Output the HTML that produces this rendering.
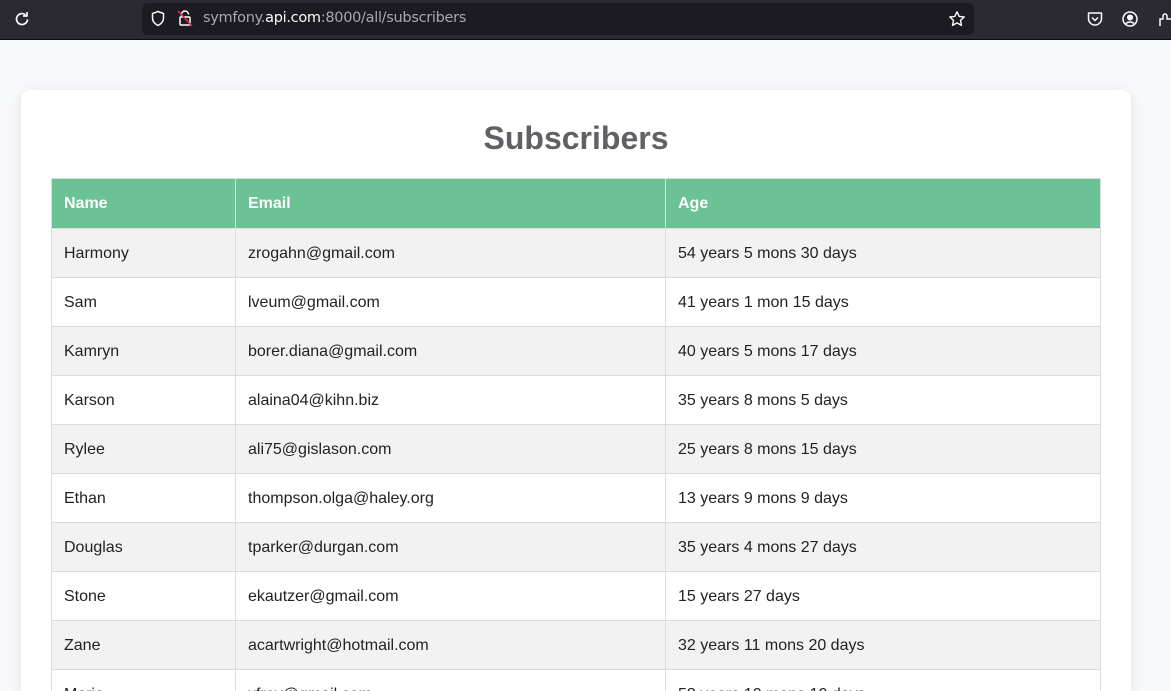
<!DOCTYPE html>
<html><head><meta charset="utf-8"><style>
*{box-sizing:border-box;margin:0;padding:0}
html,body{width:1171px;height:691px;overflow:hidden;background:#f8f9fb;font-family:"Liberation Sans",sans-serif}
.wrap{position:relative;width:1171px;height:691px;overflow:hidden}
.bar{position:absolute;left:0;top:0;width:1171px;height:40px;background:#2b2a33;border-bottom:1px solid #0c0c0d}
.url{position:absolute;left:142px;top:3px;width:832px;height:32px;background:#1c1b22;border-radius:5px}
.url span.t{position:absolute;left:61px;top:7px;font-family:"DejaVu Sans","Liberation Sans",sans-serif;font-size:14.5px;color:#a9a8ae;letter-spacing:-0.3px}
.url span.t b{font-weight:normal;color:#fbfbfe}
.card{position:absolute;left:21px;top:90px;width:1110px;height:601px;background:#fff;border-radius:9px 9px 0 0;box-shadow:0 2px 12px rgba(0,0,0,.1)}
h1{position:absolute;left:21px;width:1110px;top:120px;text-align:center;font-size:32px;font-weight:bold;color:#5f6164}
.tc{position:absolute;left:51px;top:178px;width:1050px;height:513px;overflow:hidden}
table{width:1050px;border-collapse:collapse;font-size:16px}
th,td{border:1px solid #dcdcdc;text-align:left;padding:0 12px;height:49px}
td{padding-top:2px}
th{background:#6ac295;color:#fff;font-weight:bold;height:50px;border-color:#ddd}
td{color:#222}
tr:nth-child(even) td{background:#f2f2f2}
tr:nth-child(odd) td{background:#fff}
</style></head><body><div class="wrap">
<div class="bar">
<svg style="position:absolute;left:13px;top:10px" width="18" height="18" viewBox="0 0 18 18" fill="none" stroke="#fbfbfe" stroke-width="1.7"><path d="M14.5 9.5A5.5 5.5 0 1 1 12.5 4.8"/><path d="M14 2v4h-4" stroke-linejoin="round"/></svg>
<div class="url">
<svg style="position:absolute;left:8px;top:7px" width="16" height="17" viewBox="0 0 16 17" fill="none" stroke="#fbfbfe" stroke-width="1.5"><path d="M8 1.5l5.5 2v4.5c0 3.5-2.5 6-5.5 7.5C5 14 2.5 11.5 2.5 8V3.5z"/></svg>
<svg style="position:absolute;left:35px;top:6px" width="16" height="18" viewBox="0 0 16 18" fill="none" stroke="#fbfbfe" stroke-width="1.5"><path d="M4.5 8V5.5a3.5 3.5 0 0 1 7 0"/><rect x="3" y="8" width="10" height="8" rx="1"/><path d="M1 2l14 15" stroke="#e22850" stroke-width="1.6"/></svg>
<span class="t">symfony.<b>api.com</b>:8000/all/subscribers</span>
<svg style="position:absolute;left:806px;top:7px" width="18" height="18" viewBox="0 0 18 18" fill="none" stroke="#fbfbfe" stroke-width="1.4" stroke-linejoin="round"><path d="M9 1.8l2.2 4.6 5 .6-3.7 3.4 1 5-4.5-2.5-4.5 2.5 1-5L1.8 7l5-.6z"/></svg>
</div>
<svg style="position:absolute;left:1086px;top:10px" width="18" height="18" viewBox="0 0 18 18" fill="none" stroke="#fbfbfe" stroke-width="1.5"><path d="M2.5 3h13v5.5a6.5 6.5 0 0 1-13 0z" stroke-linejoin="round"/><path d="M6 7.5l3 3 3-3"/></svg>
<svg style="position:absolute;left:1121px;top:10px" width="18" height="18" viewBox="0 0 18 18" fill="none" stroke="#fbfbfe" stroke-width="1.5"><circle cx="9" cy="9" r="7"/><circle cx="9" cy="7.5" r="2.3" fill="#fbfbfe"/><path d="M5 13.5c2-2 6-2 8 0"/></svg>
<svg style="position:absolute;left:1158px;top:10px" width="13" height="18" viewBox="0 0 13 18" fill="none" stroke="#fbfbfe" stroke-width="1.5"><path d="M2 16V9h3V6a2 2 0 0 1 4 0v3h4"/></svg>
</div>
<div class="card"></div>
<h1>Subscribers</h1>
<div class="tc"><table>
<colgroup><col style="width:184px"><col style="width:430px"><col></colgroup>
<tr><th>Name</th><th>Email</th><th>Age</th></tr>
<tr><td>Harmony</td><td>zrogahn@gmail.com</td><td>54 years 5 mons 30 days</td></tr>
<tr><td>Sam</td><td>lveum@gmail.com</td><td>41 years 1 mon 15 days</td></tr>
<tr><td>Kamryn</td><td>borer.diana@gmail.com</td><td>40 years 5 mons 17 days</td></tr>
<tr><td>Karson</td><td>alaina04@kihn.biz</td><td>35 years 8 mons 5 days</td></tr>
<tr><td>Rylee</td><td>ali75@gislason.com</td><td>25 years 8 mons 15 days</td></tr>
<tr><td>Ethan</td><td>thompson.olga@haley.org</td><td>13 years 9 mons 9 days</td></tr>
<tr><td>Douglas</td><td>tparker@durgan.com</td><td>35 years 4 mons 27 days</td></tr>
<tr><td>Stone</td><td>ekautzer@gmail.com</td><td>15 years 27 days</td></tr>
<tr><td>Zane</td><td>acartwright@hotmail.com</td><td>32 years 11 mons 20 days</td></tr>
<tr><td>Mario</td><td>xfrey@gmail.com</td><td>58 years 10 mons 10 days</td></tr>
</table></div>
</div></body></html>
